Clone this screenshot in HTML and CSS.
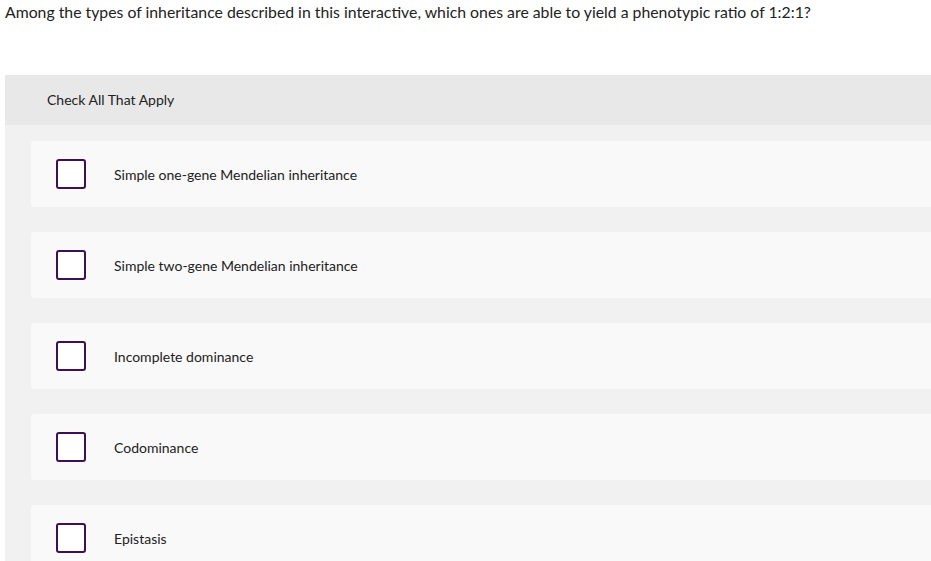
FILE: index.html
```html
<!DOCTYPE html>
<html lang="en">
<head>
    <meta charset="UTF-8">
    <meta name="viewport" content="width=device-width, initial-scale=1.0">
    <title>Check All That Apply</title>
    <link rel="stylesheet" href="styles.css">
</head>
<body>
    <p class="question">Among the types of inheritance described in this interactive, which ones are able to yield a phenotypic ratio of 1:2:1?</p>

    <div class="panel">
        <div class="panel-head">Check All That Apply</div>
        <div class="options">
            <label class="option"><span class="box"></span>Simple one-gene Mendelian inheritance</label>
            <label class="option"><span class="box"></span>Simple two-gene Mendelian inheritance</label>
            <label class="option"><span class="box"></span>Incomplete dominance</label>
            <label class="option"><span class="box"></span>Codominance</label>
            <label class="option"><span class="box"></span>Epistasis</label>
        </div>
    </div>
</body>
</html>
```

FILE: styles.css
```css
html, body {
    margin: 0;
    overflow: hidden;
}
body {
    font-family: Lato, "Liberation Sans", sans-serif;
    color: #222;
    background: white;
    padding-left: 5px;
}
.question {
    margin: 0;
    padding-top: 3px;
    font-size: 15.8px;
    line-height: 18px;
    height: 72px;
}
.panel {
    background: #f1f1f1;
    margin-right: -20px;
}
.panel-head {
    background: #e8e8e8;
    height: 50px;
    line-height: 50px;
    padding-left: 42px;
    font-size: 14px;
}
.options {
    padding: 16px 0 0 26px;
    display: flex;
    flex-direction: column;
    gap: 25px;
}
.option {
    background: #f9f9f9;
    height: 66px;
    display: flex;
    align-items: center;
    padding-left: 25px;
    font-size: 14px;
    border-radius: 3px 0 0 3px;
    cursor: pointer;
}
.box {
    width: 26px;
    height: 26px;
    border: 2px solid #3c1053;
    border-radius: 3px;
    background: white;
    margin-right: 28px;
    flex-shrink: 0;
}
```
